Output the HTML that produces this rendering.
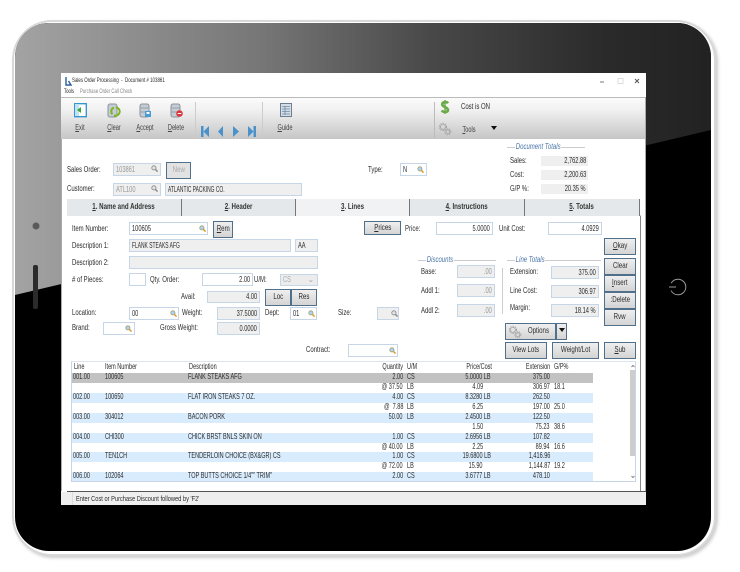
<!DOCTYPE html>
<html><head><meta charset="utf-8"><style>
html,body{margin:0;padding:0;background:#fff}
body{width:740px;height:572px;position:relative;overflow:hidden;font-family:"Liberation Sans",sans-serif;font-size:7.8px;color:#2c2c2c}
#tab{position:absolute;left:12px;top:20px;width:700px;height:532px;border:2px solid #d8d8d8;border-radius:40px;box-shadow:2px 2px 3px #ccc;background:#fff}
#scr{position:absolute;left:15px;top:23px;width:696px;height:528px;border-radius:34px;overflow:hidden;background:#000}
#scr svg{position:absolute;left:0;top:0}
#win{position:absolute;left:61px;top:73px;width:585px;height:432px;background:#fff;overflow:hidden;filter:blur(.35px)}
#win>*,.a{position:absolute}
.l{position:absolute;line-height:10px;height:10px;white-space:nowrap;transform:scaleX(.77);transform-origin:0 0}
.n{transform:scaleX(.67)}
.f{position:absolute;box-sizing:border-box;border:1px solid #c6d6e6;background:#fff;line-height:11px;padding:0 2px;white-space:nowrap;color:#2c2c2c}
s{display:inline-block;text-decoration:none;transform:scaleX(.73);transform-origin:0 0}
s.u{transform:scaleX(.63)}
.g{background:#efefef}
.r{text-align:right}
.r s{transform-origin:100% 0}
.b{position:absolute;box-sizing:border-box;border:1.5px solid #4f6f8b;background:linear-gradient(#efefef,#d4d4d4);text-align:center;white-space:nowrap;color:#2c2c2c}
.b s,.t s{transform-origin:50% 0;transform:scaleX(.79)}
.tb{position:absolute;width:40px;text-align:center;line-height:10px;font-size:7.8px;color:#444;transform:scaleX(.72)}
.t{position:absolute;top:126px;height:17px;box-sizing:border-box;background:#e4e8ea;text-align:center;font-weight:bold;line-height:16px;font-size:7.8px;border-right:1px solid #777;color:#333}
.row{position:absolute;left:11px;width:521px;height:10px}
.c{position:absolute;line-height:10px;white-space:nowrap;color:#2c2c2c;margin-top:-1px;transform:scaleX(.71);transform-origin:0 0}
.c[style*="right:"]{transform-origin:100% 0}
.m{position:absolute;width:7px;height:7px}
u{text-decoration:underline}
</style></head><body>
<svg width="0" height="0" style="position:absolute"><defs>
<symbol id="mag" viewBox="0 0 8 8"><circle cx="3.3" cy="3.3" r="2.4" fill="#a9d4f5" stroke="#a8a070" stroke-width="1"/><path d="M5 5L7.5 7.5" stroke="#e09a20" stroke-width="1.7"/></symbol>
<symbol id="magg" viewBox="0 0 8 8"><circle cx="3.3" cy="3.3" r="2.4" fill="#e4e4e4" stroke="#8a8a8a" stroke-width="1"/><path d="M5 5L7.5 7.5" stroke="#8a8a8a" stroke-width="1.7"/></symbol>
<symbol id="gear" viewBox="0 0 20 20"><g fill="none" stroke="#a2a2a2"><circle cx="7" cy="7" r="3.6" stroke-width="1.2"/><circle cx="7" cy="7" r="5.2" stroke-width="1.4" stroke-dasharray="1.8 1.6"/><circle cx="14" cy="14" r="2.8" stroke-width="1.2"/><circle cx="14" cy="14" r="4.4" stroke-width="1.4" stroke-dasharray="1.6 1.5"/></g></symbol>
</defs></svg>
<div id="tab"></div>
<div id="scr"><svg width="696" height="528"><defs><linearGradient id="gl" x1="0" x2="1" y1="0" y2="0"><stop offset="0" stop-color="#a3a3a3"/><stop offset=".35" stop-color="#777"/><stop offset=".6" stop-color="#484848"/><stop offset=".85" stop-color="#2a2a2a"/><stop offset="1" stop-color="#222"/></linearGradient></defs>
<polygon points="0,0 696,0 696,107 0,272" fill="url(#gl)"/>
<circle cx="21" cy="203" r="3.5" fill="#5a5a5a"/>
<rect x="18" y="242" width="5" height="44" rx="2" fill="#2b2b2b"/>
<circle cx="663" cy="264" r="7.8" fill="none" stroke="#9a9a9a" stroke-width="1" stroke-dasharray="41 8" stroke-dashoffset="-4" transform="rotate(180 663 264)"/>
<path d="M654 264H661" stroke="#9a9a9a"/>
</svg></div>
<div id="win">
<div style="left:0;top:0;width:585px;height:24px;background:#fff"></div>
<svg style="left:4px;top:4px" width="7" height="9"><path d="M1 0V8H6L3.5 4" fill="none" stroke="#2a5f9a" stroke-width="1.4"/></svg>
<span class="l n" style="left:11px;top:3px;font-size:6.6px">Sales Order Processing &nbsp;-&nbsp; Document # 103861</span>
<span class="l n" style="left:3px;top:14px;font-size:6.4px">Tools</span>
<span class="l n" style="left:19px;top:14px;font-size:6.4px;color:#888">Purchase Order Call Check</span>
<svg style="left:537px;top:3px" width="50" height="10"><path d="M2 6H6" stroke="#777"/><rect x="20" y="2.5" width="5" height="5" fill="none" stroke="#ddd"/><path d="M37 3L41 7M41 3L37 7" stroke="#555"/></svg>
<div style="left:0;top:24px;width:585px;height:1px;background:#bbb"></div>
<div style="left:0;top:25px;width:585px;height:41px;background:linear-gradient(#fbfbfb,#f0f0f0 30%,#c6c6c6)"></div>
<div style="left:134px;top:29px;width:1px;height:36px;background:#ccc"></div>
<div style="left:201px;top:29px;width:1px;height:36px;background:#ccc"></div>
<div style="left:373px;top:29px;width:1px;height:36px;background:#bbb"></div>
<svg style="left:13px;top:30px" width="13" height="15"><rect x=".7" y=".7" width="11.6" height="13" fill="#fff" stroke="#2d8fcf" stroke-width="1.3"/><rect x="1" y="1" width="4" height="12" fill="#bfe2f5"/><path d="M3 7L7 4V10Z" fill="#3aa53a"/></svg>
<svg style="left:46px;top:30px" width="14" height="15"><rect x="1" y="1" width="9" height="13" rx="2" fill="#c5ccd3" stroke="#8b949c"/><circle cx="8.5" cy="8.5" r="4.2" fill="none" stroke="#7ab51d" stroke-width="2" stroke-dasharray="8 2"/></svg>
<svg style="left:78px;top:30px" width="13" height="15"><rect x="1" y="1" width="9" height="13" rx="2" fill="#c5ccd3" stroke="#8b949c"/><path d="M1 5H10M1 9H10" stroke="#8b949c" stroke-width=".7"/><rect x="6" y="8" width="6" height="6" fill="#4a9ad4"/><rect x="7.5" y="9" width="3" height="2" fill="#fff"/></svg>
<svg style="left:109px;top:30px" width="14" height="15"><rect x="1" y="1" width="9" height="13" rx="2" fill="#c5ccd3" stroke="#8b949c"/><path d="M1 5H10M1 9H10" stroke="#8b949c" stroke-width=".7"/><circle cx="9.5" cy="10.5" r="3.3" fill="#d9363e"/><path d="M7.7 10.5H11.3" stroke="#fff"/></svg>
<span class="tb" style="left:-1px;top:50px"><u>E</u>xit</span>
<span class="tb" style="left:33px;top:50px"><u>C</u>lear</span>
<span class="tb" style="left:64px;top:50px"><u>A</u>ccept</span>
<span class="tb" style="left:95px;top:50px"><u>D</u>elete</span>
<span class="tb" style="left:204px;top:50px"><u>G</u>uide</span>
<svg style="left:139px;top:52px" width="60" height="13" fill="#4a92cb"><path d="M1 1H3.5V12H1ZM3.5 6.5L9 1V12Z"/><path d="M18 6.5L23 1V12Z"/><path d="M33 1L39 6.5L33 12Z"/><path d="M48 1L53.5 6.5L48 12ZM53.5 1H56V12H53.5Z"/></svg>
<svg style="left:219px;top:30px" width="12" height="15"><rect x=".5" y=".5" width="11" height="13" fill="#d5dde6" stroke="#6f7d8c"/><path d="M2 3.5H10M2 6H10M2 8.5H10M2 11H10M5 3V12" stroke="#6f8aa5" stroke-width=".8"/></svg>
<svg style="left:379px;top:27px" width="10" height="14"><path d="M8 3.2C6.8 1.5 2.2 1.7 2.2 4.4S8 7.3 8 10 3 12.5 1.8 10.4" fill="none" stroke="#6aaa48" stroke-width="2.6"/><path d="M5 0V14" stroke="#6aaa48" stroke-width="1.4"/></svg>
<span class="l" style="left:400px;top:29px;font-size:7.8px">Cost is ON</span>
<svg style="left:377px;top:49px" width="14" height="15"><use href="#gear" width="14" height="14"/></svg>
<span class="tb" style="left:388px;top:52px"><u>T</u>ools</span>
<svg style="left:430px;top:53px" width="7" height="5"><path d="M0 0H6L3 4Z" fill="#111"/></svg>
<span class="l" style="left:6px;top:92px">Sales Order:</span>
<div class="f g" style="left:52px;top:90px;width:48px;height:13px;color:#999"><s>103861</s></div><svg class="m" style="left:90px;top:92px"><use href="#magg" width="7" height="7"/></svg>
<div class="b" style="left:105px;top:89px;width:25px;height:17px;line-height:14px;color:#aaa;background:#e2e2e2"><s>New</s></div>
<span class="l" style="left:6px;top:111px">Customer:</span>
<div class="f g" style="left:52px;top:110px;width:48px;height:13px;color:#999"><s>ATL100</s></div><svg class="m" style="left:90px;top:112px"><use href="#magg" width="7" height="7"/></svg>
<div class="f g" style="left:104px;top:110px;width:137px;height:13px"><s class="u">ATLANTIC PACKING CO.</s></div>
<span class="l" style="left:307px;top:92px">Type:</span>
<div class="f" style="left:339px;top:90px;width:27px;height:13px"><s>N</s></div><svg class="m" style="left:356px;top:93px"><use href="#mag" width="7" height="7"/></svg>
<div style="left:446px;top:74px;width:78px;height:1px;background:#ccc"></div>
<span class="l" style="left:454px;top:69px;background:#fff;padding:0 1px;color:#4a76a8;font-style:italic">Document Totals</span>
<span class="l" style="left:449px;top:83px">Sales:</span><div class="f g r" style="left:480px;top:83px;width:47px;height:10px;line-height:9px;border:0"><s>2,762.88</s></div>
<span class="l" style="left:449px;top:97px">Cost:</span><div class="f g r" style="left:480px;top:97px;width:47px;height:10px;line-height:9px;border:0"><s>2,200.63</s></div>
<span class="l" style="left:449px;top:111px">G/P %:</span><div class="f g r" style="left:480px;top:111px;width:47px;height:10px;line-height:9px;border:0"><s>20.35 %</s></div>
<div style="left:6px;top:142px;width:574px;height:1px;background:#ccc"></div>
<div class="t" style="left:6px;width:115px"><s><u>1</u>. Name and Address</s></div>
<div class="t" style="left:121px;width:114px"><s><u>2</u>. Header</s></div>
<div class="t" style="left:235px;width:114px;background:#f0f2f3"><s><u>3</u>. Lines</s></div>
<div class="t" style="left:349px;width:115px"><s><u>4</u>. Instructions</s></div>
<div class="t" style="left:464px;width:115px"><s><u>5</u>. Totals</s></div>
<div style="left:579px;top:143px;width:1px;height:275px;background:#888"></div>
<div style="left:584px;top:24px;width:1px;height:395px;background:#aaa"></div>
<div style="left:0;top:66px;width:1px;height:352px;background:#aaa"></div>
<span class="l" style="left:11px;top:151px">Item Number:</span>
<div class="f" style="left:68px;top:149px;width:79px;height:13px"><s>100605</s></div><svg class="m" style="left:138px;top:152px"><use href="#mag" width="7" height="7"/></svg>
<div class="b" style="left:152px;top:148px;width:20px;height:17px;line-height:14px"><s><u>R</u>em</s></div>
<span class="l" style="left:11px;top:168px">Description 1:</span>
<div class="f g" style="left:68px;top:166px;width:162px;height:13px"><s class="u">FLANK STEAKS AFG</s></div>
<div class="f g" style="left:234px;top:166px;width:23px;height:13px"><s>AA</s></div>
<span class="l" style="left:11px;top:185px">Description 2:</span>
<div class="f g" style="left:68px;top:183px;width:189px;height:13px"></div>
<span class="l" style="left:11px;top:202px"># of Pieces:</span>
<div class="f" style="left:68px;top:200px;width:17px;height:13px"></div>
<span class="l" style="left:89px;top:202px">Qty. Order:</span>
<div class="f r" style="left:141px;top:200px;width:51px;height:13px"><s>2.00</s></div>
<span class="l" style="left:193px;top:202px">U/M:</span>
<div class="f g" style="left:219px;top:201px;width:38px;height:12px;color:#aaa;line-height:10px;background:#ececec"><s>CS</s><span style="position:absolute;right:3px;top:0">&#8964;</span></div>
<span class="l" style="left:120px;top:219px">Avail:</span>
<div class="f g r" style="left:146px;top:218px;width:53px;height:12px;line-height:10px"><s>4.00</s></div>
<div class="b" style="left:204px;top:216px;width:26px;height:17px;line-height:14px"><s>Loc</s></div>
<div class="b" style="left:230px;top:216px;width:26px;height:17px;line-height:14px"><s>Res</s></div>
<span class="l" style="left:11px;top:235px">Location:</span>
<div class="f" style="left:68px;top:234px;width:50px;height:13px"><s>00</s></div><svg class="m" style="left:109px;top:237px"><use href="#mag" width="7" height="7"/></svg>
<span class="l" style="left:121px;top:235px">Weight:</span>
<div class="f g r" style="left:156px;top:234px;width:43px;height:13px"><s>37.5000</s></div>
<span class="l" style="left:204px;top:235px">Dept:</span>
<div class="f" style="left:229px;top:234px;width:27px;height:13px"><s>01</s></div><svg class="m" style="left:247px;top:237px"><use href="#mag" width="7" height="7"/></svg>
<span class="l" style="left:277px;top:235px">Size:</span>
<div class="f g" style="left:316px;top:234px;width:22px;height:13px"></div><svg class="m" style="left:330px;top:237px"><use href="#magg" width="7" height="7"/></svg>
<span class="l" style="left:11px;top:250px">Brand:</span>
<div class="f" style="left:42px;top:249px;width:32px;height:13px"></div><svg class="m" style="left:64px;top:252px"><use href="#mag" width="7" height="7"/></svg>
<span class="l" style="left:99px;top:250px">Gross Weight:</span>
<div class="f g r" style="left:156px;top:249px;width:43px;height:13px"><s>0.0000</s></div>
<span class="l" style="left:245px;top:272px">Contract:</span>
<div class="f" style="left:287px;top:271px;width:50px;height:13px"></div><svg class="m" style="left:328px;top:274px"><use href="#mag" width="7" height="7"/></svg>
<div class="b" style="left:303px;top:148px;width:37px;height:14px;line-height:11px"><s><u>P</u>rices</s></div>
<span class="l" style="left:344px;top:151px">Price:</span>
<div class="f r" style="left:375px;top:149px;width:57px;height:13px"><s>5.0000</s></div>
<span class="l" style="left:438px;top:151px">Unit Cost:</span>
<div class="f r" style="left:487px;top:149px;width:54px;height:13px"><s>4.0929</s></div>
<div class="b" style="left:543px;top:165px;width:32px;height:17px;line-height:14px"><s><u>O</u>kay</s></div>
<div class="b" style="left:543px;top:185px;width:32px;height:17px;line-height:14px"><s>Clear</s></div>
<div class="b" style="left:543px;top:202px;width:32px;height:17px;line-height:14px"><s><u>I</u>nsert</s></div>
<div class="b" style="left:543px;top:219px;width:32px;height:17px;line-height:14px"><s>:Delete</s></div>
<div class="b" style="left:543px;top:236px;width:32px;height:17px;line-height:14px"><s>Rvw</s></div>
<div style="left:357px;top:187px;width:78px;height:1px;background:#ccc"></div>
<span class="l" style="left:365px;top:182px;background:#fff;padding:0 1px;color:#4a76a8;font-style:italic">Discounts</span>
<span class="l" style="left:360px;top:194px">Base:</span><div class="f g r" style="left:396px;top:192px;width:38px;height:13px;color:#999"><s>.00</s></div>
<span class="l" style="left:360px;top:213px">Addl 1:</span><div class="f g r" style="left:396px;top:211px;width:38px;height:13px;color:#999"><s>.00</s></div>
<span class="l" style="left:360px;top:233px">Addl 2:</span><div class="f g r" style="left:396px;top:231px;width:38px;height:13px;color:#999"><s>.00</s></div>
<div style="left:446px;top:187px;width:94px;height:1px;background:#ccc"></div>
<span class="l" style="left:454px;top:182px;background:#fff;padding:0 1px;color:#4a76a8;font-style:italic">Line Totals</span>
<div style="left:441px;top:195px;width:1px;height:46px;background:#ccc"></div>
<span class="l" style="left:449px;top:194px">Extension:</span><div class="f g r" style="left:490px;top:193px;width:48px;height:13px"><s>375.00</s></div>
<span class="l" style="left:449px;top:213px">Line Cost:</span><div class="f g r" style="left:490px;top:212px;width:48px;height:13px"><s>306.97</s></div>
<span class="l" style="left:449px;top:230px">Margin:</span><div class="f g r" style="left:490px;top:231px;width:48px;height:13px"><s>18.14 %</s></div>
<div class="b" style="left:444px;top:250px;width:51px;height:17px;line-height:14px;padding-left:16px"><s>Options</s></div>
<svg style="left:447px;top:252px" width="14" height="14"><use href="#gear" width="14" height="14"/></svg>
<div class="b" style="left:495px;top:250px;width:11px;height:17px"></div><svg style="left:498px;top:255px" width="6" height="5"><path d="M0 0H6L3 4Z" fill="#111"/></svg>
<div class="b" style="left:444px;top:269px;width:42px;height:17px;line-height:14px"><s>View Lots</s></div>
<div class="b" style="left:491px;top:269px;width:47px;height:17px;line-height:14px"><s>Weight/Lot</s></div>
<div class="b" style="left:543px;top:269px;width:32px;height:17px;line-height:14px"><s><u>S</u>ub</s></div>
<div style="left:10px;top:288px;width:565px;height:121px;box-sizing:border-box;border:1px solid #c6d6e6;border-top-color:#dbe5ee;background:#fff"></div>
<div class="row" style="top:300px;background:#c2c2c2"></div>
<div class="row" style="top:320px;background:#d9ecfd"></div>
<div class="row" style="top:340px;background:#d9ecfd"></div>
<div class="row" style="top:360px;background:#d9ecfd"></div>
<div class="row" style="top:379px;background:#d9ecfd"></div>
<div class="row" style="top:399px;height:9px;background:#d9ecfd"></div>
<div style="left:569px;top:297px;width:5px;height:86px;background:#cdcdcd"></div>
<svg style="left:569px;top:290px" width="6" height="118"><path d="M1.5 4L3 2.5L4.5 4M1.5 113L3 114.5L4.5 113" fill="none" stroke="#666" stroke-width=".8"/></svg>
<span class="c" style="left:13px;top:290px">Line</span><span class="c" style="left:44px;top:290px">Item Number</span><span class="c" style="left:128px;top:290px">Description</span><span class="c" style="right:243px;top:290px">Quantity</span><span class="c" style="left:346px;top:290px">U/M</span><span class="c" style="right:154px;top:290px">Price/Cost</span><span class="c" style="right:96px;top:290px">Extension</span><span class="c" style="left:493px;top:290px">G/P%</span>
<span class="c" style="left:12px;top:300px">001.00</span><span class="c" style="left:44px;top:300px">100605</span><span class="c" style="left:127px;top:300px">FLANK STEAKS AFG</span><span class="c" style="right:243px;top:300px">2.00</span><span class="c" style="left:346px;top:300px">CS</span><span class="c" style="right:155px;top:300px">5.0000 LB</span><span class="c" style="right:96px;top:300px">375.00</span>
<span class="c" style="right:243px;top:310px">@ 37.50</span><span class="c" style="left:346px;top:310px">LB</span><span class="c" style="right:163px;top:310px">4.09</span><span class="c" style="right:96px;top:310px">306.97</span><span class="c" style="left:493px;top:310px">18.1</span>
<span class="c" style="left:12px;top:320px">002.00</span><span class="c" style="left:44px;top:320px">100650</span><span class="c" style="left:127px;top:320px">FLAT IRON STEAKS 7 OZ.</span><span class="c" style="right:243px;top:320px">4.00</span><span class="c" style="left:346px;top:320px">CS</span><span class="c" style="right:155px;top:320px">8.3280 LB</span><span class="c" style="right:96px;top:320px">262.50</span>
<span class="c" style="right:243px;top:330px">@ &nbsp;7.88</span><span class="c" style="left:346px;top:330px">LB</span><span class="c" style="right:163px;top:330px">6.25</span><span class="c" style="right:96px;top:330px">197.00</span><span class="c" style="left:493px;top:330px">25.0</span>
<span class="c" style="left:12px;top:340px">003.00</span><span class="c" style="left:44px;top:340px">304012</span><span class="c" style="left:127px;top:340px">BACON PORK</span><span class="c" style="right:243px;top:340px">50.00</span><span class="c" style="left:346px;top:340px">LB</span><span class="c" style="right:155px;top:340px">2.4500 LB</span><span class="c" style="right:96px;top:340px">122.50</span>
<span class="c" style="right:163px;top:350px">1.50</span><span class="c" style="right:96px;top:350px">75.23</span><span class="c" style="left:493px;top:350px">38.6</span>
<span class="c" style="left:12px;top:360px">004.00</span><span class="c" style="left:44px;top:360px">CHI300</span><span class="c" style="left:127px;top:360px">CHICK BRST BNLS SKIN ON</span><span class="c" style="right:243px;top:360px">1.00</span><span class="c" style="left:346px;top:360px">CS</span><span class="c" style="right:155px;top:360px">2.6956 LB</span><span class="c" style="right:96px;top:360px">107.82</span>
<span class="c" style="right:243px;top:370px">@ 40.00</span><span class="c" style="left:346px;top:370px">LB</span><span class="c" style="right:163px;top:370px">2.25</span><span class="c" style="right:96px;top:370px">89.94</span><span class="c" style="left:493px;top:370px">16.6</span>
<span class="c" style="left:12px;top:379px">005.00</span><span class="c" style="left:44px;top:379px">TEN1CH</span><span class="c" style="left:127px;top:379px">TENDERLOIN CHOICE (BX&amp;GR) CS</span><span class="c" style="right:243px;top:379px">1.00</span><span class="c" style="left:346px;top:379px">CS</span><span class="c" style="right:155px;top:379px">19.6800 LB</span><span class="c" style="right:96px;top:379px">1,416.96</span>
<span class="c" style="right:243px;top:389px">@ 72.00</span><span class="c" style="left:346px;top:389px">LB</span><span class="c" style="right:163px;top:389px">15.90</span><span class="c" style="right:96px;top:389px">1,144.87</span><span class="c" style="left:493px;top:389px">19.2</span>
<span class="c" style="left:12px;top:399px">006.00</span><span class="c" style="left:44px;top:399px">102064</span><span class="c" style="left:127px;top:399px">TOP BUTTS CHOICE 1/4"" TRIM"</span><span class="c" style="right:243px;top:399px">2.00</span><span class="c" style="left:346px;top:399px">CS</span><span class="c" style="right:155px;top:399px">3.6777 LB</span><span class="c" style="right:96px;top:399px">478.10</span>
<div style="left:6px;top:418px;width:579px;height:1px;background:#555"></div>
<div style="left:0;top:419px;width:585px;height:13px;background:#efefef"></div>
<div style="left:11px;top:419px;width:1px;height:13px;background:#ddd"></div>
<span class="l" style="left:15px;top:421px;font-size:7.4px">Enter Cost or Purchase Discount followed by 'F2'</span>
</div>
</body></html>
